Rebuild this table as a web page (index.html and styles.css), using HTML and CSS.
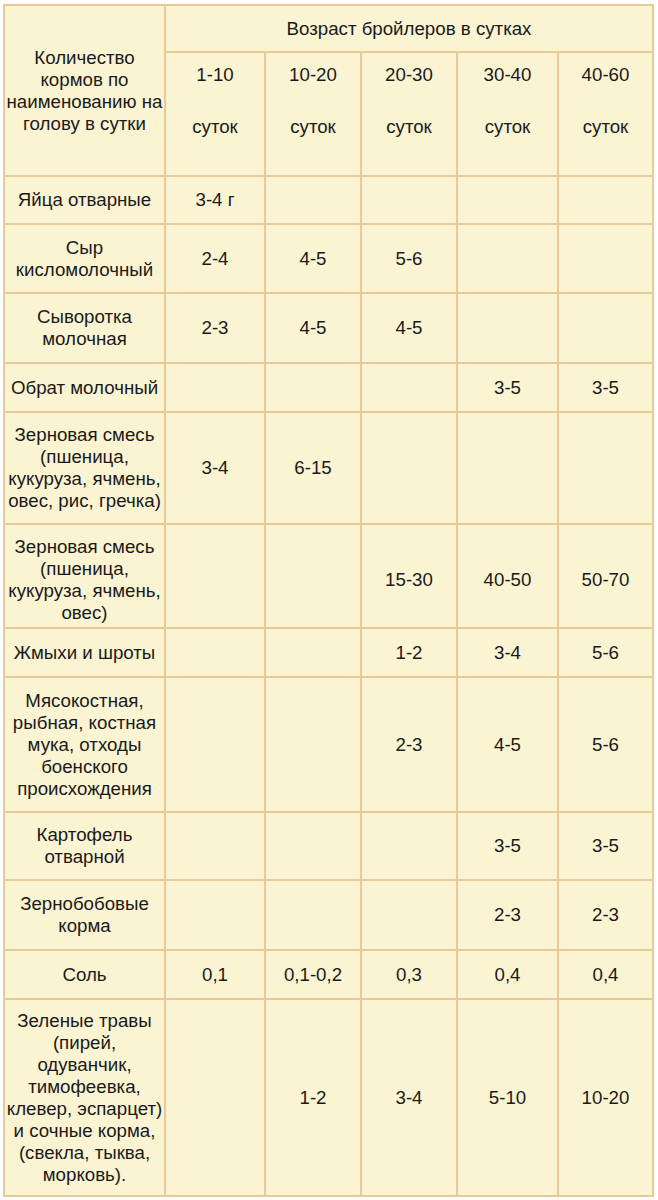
FILE: index.html
```html
<!DOCTYPE html>
<html lang="ru">
<head>
<meta charset="utf-8">
<title>Рацион бройлеров</title>
<link rel="stylesheet" href="styles.css">
</head>
<body>
<div class="table">
  <div class="cell head-left">Количество<br>кормов по<br>наименованию на<br>голову в сутки</div>
  <div class="cell head-top">Возраст бройлеров в сутках</div>
  <div class="cell day"><span>1-10</span><span>суток</span></div>
  <div class="cell day"><span>10-20</span><span>суток</span></div>
  <div class="cell day"><span>20-30</span><span>суток</span></div>
  <div class="cell day"><span>30-40</span><span>суток</span></div>
  <div class="cell day"><span>40-60</span><span>суток</span></div>

  <div class="cell name">Яйца отварные</div>
  <div class="cell">3-4 г</div><div class="cell"></div><div class="cell"></div><div class="cell"></div><div class="cell"></div>

  <div class="cell name">Сыр кисломолочный</div>
  <div class="cell">2-4</div><div class="cell">4-5</div><div class="cell">5-6</div><div class="cell"></div><div class="cell"></div>

  <div class="cell name">Сыворотка молочная</div>
  <div class="cell">2-3</div><div class="cell">4-5</div><div class="cell">4-5</div><div class="cell"></div><div class="cell"></div>

  <div class="cell name">Обрат молочный</div>
  <div class="cell"></div><div class="cell"></div><div class="cell"></div><div class="cell">3-5</div><div class="cell">3-5</div>

  <div class="cell name">Зерновая смесь (пшеница, кукуруза, ячмень, овес, рис, гречка)</div>
  <div class="cell">3-4</div><div class="cell">6-15</div><div class="cell"></div><div class="cell"></div><div class="cell"></div>

  <div class="cell name low">Зерновая смесь (пшеница, кукуруза, ячмень, овес)</div>
  <div class="cell low"></div><div class="cell low"></div><div class="cell low">15-30</div><div class="cell low">40-50</div><div class="cell low">50-70</div>

  <div class="cell name">Жмыхи и шроты</div>
  <div class="cell"></div><div class="cell"></div><div class="cell">1-2</div><div class="cell">3-4</div><div class="cell">5-6</div>

  <div class="cell name">Мясокостная, рыбная, костная мука, отходы боенского происхождения</div>
  <div class="cell"></div><div class="cell"></div><div class="cell">2-3</div><div class="cell">4-5</div><div class="cell">5-6</div>

  <div class="cell name">Картофель отварной</div>
  <div class="cell"></div><div class="cell"></div><div class="cell"></div><div class="cell">3-5</div><div class="cell">3-5</div>

  <div class="cell name">Зернобобовые корма</div>
  <div class="cell"></div><div class="cell"></div><div class="cell"></div><div class="cell">2-3</div><div class="cell">2-3</div>

  <div class="cell name">Соль</div>
  <div class="cell">0,1</div><div class="cell">0,1-0,2</div><div class="cell">0,3</div><div class="cell">0,4</div><div class="cell">0,4</div>

  <div class="cell name">Зеленые травы (пирей, одуванчик, тимофеевка, клевер, эспарцет) и сочные корма, (свекла, тыква, морковь).</div>
  <div class="cell"></div><div class="cell">1-2</div><div class="cell">3-4</div><div class="cell">5-10</div><div class="cell">10-20</div>
</div>
</body>
</html>
```

FILE: styles.css
```css
html, body {
  margin: 0;
  padding: 0;
  background: #ffffff;
}

body {
  font-family: "Liberation Sans", Arial, sans-serif;
  font-size: 18.7px;
  line-height: 22px;
  color: #1a1a1a;
}

.table {
  margin: 4px 0 0 3px;
  width: 651px;
  box-sizing: border-box;
  padding: 2px;
  background: #e7ca98;
  display: grid;
  grid-template-columns: 159px 98px 94px 94px 99px 93px;
  grid-template-rows: 45px 122px 46px 67px 68px 47px 110px 102px 47px 133px 66px 68px 47px 195px;
  gap: 2px;
}

.cell {
  background: #faf4d3;
  display: flex;
  align-items: center;
  justify-content: center;
  text-align: center;
  padding: 0 4px;
  box-sizing: border-box;
}

.head-left {
  grid-row: 1 / span 2;
  grid-column: 1;
  display: block;
  align-self: stretch;
  padding: 41px 0 0;
  white-space: nowrap;
}

.head-top {
  grid-column: 2 / span 5;
}

.day {
  flex-direction: column;
  justify-content: flex-start;
  padding-top: 11px;
  gap: 30px;
}

.name {
  padding: 0 1px;
}

.low {
  padding-top: 8px;
}
```
